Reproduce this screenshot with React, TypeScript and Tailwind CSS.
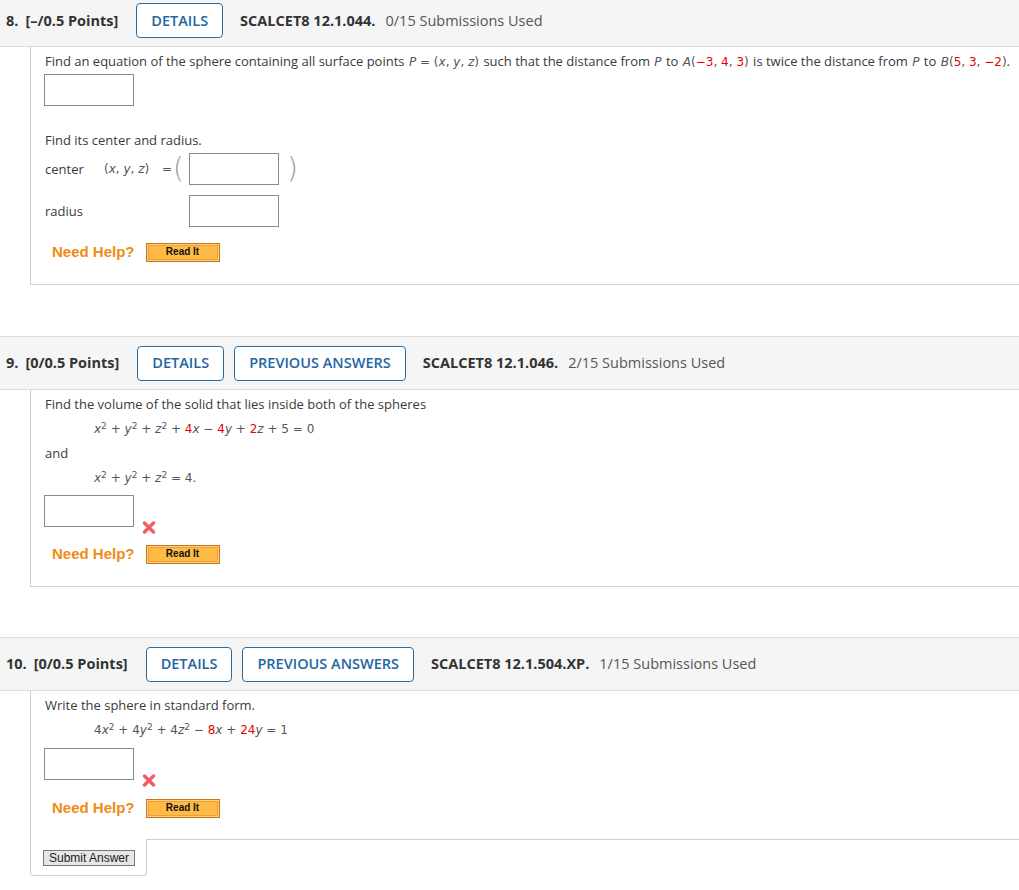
import type { ReactNode } from 'react'

const body = "font-['Open_Sans',sans-serif] text-[13px] leading-[18px] text-[#3a3a3a]"
const math = "font-['DejaVu_Sans',sans-serif] text-[12px] leading-[18px] text-[#555]"

const V = ({ children }: { children: ReactNode }) => <i className="italic">{children}</i>
const R = ({ children }: { children: ReactNode }) => <span className="text-[#e80000]">{children}</span>
const Sq = () => <sup className="text-[9px]">2</sup>

const WrongIcon = () => (
  <svg width={14} height={13} viewBox="0 0 14 13" className="ml-[8px] mt-[26px] shrink-0">
    <path d="M2.5 2l9 9M11.5 2l-9 9" stroke="#f25c66" strokeWidth="3.4" strokeLinecap="round" />
  </svg>
)

function AnswerBox() {
  return <input readOnly className="-ml-px h-[32px] w-[90px] border border-[#8a8a8a] bg-white outline-none" />
}

function NeedHelp() {
  return (
    <div className="ml-[7px] flex h-[18px] items-center">
      <span className="font-['Liberation_Sans',sans-serif] text-[15px] font-bold text-[#ef8b14]">Need Help?</span>
      <button className="ml-[11px] flex h-[19px] w-[74px] items-center justify-center border border-[#c8741c] bg-[#ffbb45] shadow-[inset_0_0_0_1px_#ffd07a,inset_0_0_0_2px_#eaa03c] font-['Liberation_Sans',sans-serif] text-[10px] font-bold text-[#111]">
        Read It
      </button>
    </div>
  )
}

function Header({
  num,
  points,
  code,
  subs,
  prev,
  first,
}: {
  num: string
  points: string
  code: string
  subs: string
  prev?: boolean
  first?: boolean
}) {
  const btn =
    "flex h-[35px] items-center rounded-[4px] border border-[#2c6b9e] bg-white px-[14px] text-[14.5px] font-semibold text-[#1f66a3]"
  return (
    <div
      className={`${
        first ? 'h-[47px] border-b pt-[3px]' : 'flex h-[54px] items-center border-y'
      } border-[#dcdcdc] bg-[#f5f5f5] pl-[6px] font-['Open_Sans',sans-serif] text-[14.5px]`}
    >
      <div className="flex h-[35px] items-center">
        <span className="font-bold text-[#333]">{num}</span>
        <span className="ml-[7px] font-bold text-[#333]">[{points} Points]</span>
        <button className={`${btn} ml-[18px]`}>DETAILS</button>
        {prev && <button className={`${btn} ml-[10px]`}>PREVIOUS ANSWERS</button>}
        <span className="ml-[17px] font-bold text-[#333]">{code}</span>
        <span className="ml-[10px] text-[#555]">{subs}</span>
      </div>
    </div>
  )
}

export default function App() {
  return (
    <div className="min-h-[890px] w-[1019px] bg-white">
      {/* Question 8 */}
      <Header first num="8." points="–/0.5" code="SCALCET8 12.1.044." subs="0/15 Submissions Used" />
      <div className={`ml-[30px] flex flex-col border-b border-l border-[#cfcfcf] pb-[23px] pl-[14px] pt-[5px] ${body}`}>
        <p>
          Find an equation of the sphere containing all surface points{' '}
          <span className={`${math} mx-px`}>
            <V>P</V> = (<V>x</V>, <V>y</V>, <V>z</V>)
          </span>{' '}
          such that the distance from <span className={`${math} mx-px`}><V>P</V></span> to{' '}
          <span className={`${math} mx-px`}>
            <V>A</V>(<R>−3</R>, <R>4</R>, <R>3</R>)
          </span>{' '}
          is twice the distance from <span className={`${math} mx-px`}><V>P</V></span> to{' '}
          <span className={`${math} ml-px`}>
            <V>B</V>(<R>5</R>, <R>3</R>, <R>−2</R>)
          </span>
          .
        </p>
        <div className="mt-[3px]">
          <AnswerBox />
        </div>
        <p className="mt-[25px]">Find its center and radius.</p>
        <div className="mt-[4px] flex h-[32px] items-center">
          <span className="w-[59px]">center</span>
          <span className={`${math} w-[58px] text-[12.5px]`}>
            (<V>x</V>, <V>y</V>, <V>z</V>)
          </span>
          <span className={`${math} w-[11px]`}>=</span>
          <span className="w-[17px] font-['DejaVu_Sans',sans-serif] text-[28px] font-extralight leading-none text-[#9a9a9a]">(</span>
          <AnswerBox />
          <span className="ml-[8px] font-['DejaVu_Sans',sans-serif] text-[28px] font-extralight leading-none text-[#9a9a9a]">)</span>
        </div>
        <div className="mt-[10px] flex h-[32px] items-center">
          <span className="w-[145px]">radius</span>
          <AnswerBox />
        </div>
        <div className="mt-[16px]">
          <NeedHelp />
        </div>
      </div>

      {/* Question 9 */}
      <div className="mt-[51px]">
        <Header prev num="9." points="0/0.5" code="SCALCET8 12.1.046." subs="2/15 Submissions Used" />
      </div>
      <div className={`ml-[30px] flex flex-col border-b border-l border-[#cfcfcf] pb-[23px] pl-[14px] pt-[5px] ${body}`}>
        <p>Find the volume of the solid that lies inside both of the spheres</p>
        <p className={`${math} ml-[49px] mt-[7px]`}>
          <V>x</V>
          <Sq /> + <V>y</V>
          <Sq /> + <V>z</V>
          <Sq /> + <R>4</R>
          <V>x</V> − <R>4</R>
          <V>y</V> + <R>2</R>
          <V>z</V> + 5 = 0
        </p>
        <p className="mt-[6px]">and</p>
        <p className={`${math} ml-[49px] mt-[7px]`}>
          <V>x</V>
          <Sq /> + <V>y</V>
          <Sq /> + <V>z</V>
          <Sq /> = 4.
        </p>
        <div className="mt-[8px] flex items-start">
          <AnswerBox />
          <WrongIcon />
        </div>
        <div className="mt-[11px]">
          <NeedHelp />
        </div>
      </div>

      {/* Question 10 */}
      <div className="mt-[50px]">
        <Header prev num="10." points="0/0.5" code="SCALCET8 12.1.504.XP." subs="1/15 Submissions Used" />
      </div>
      <div className={`ml-[30px] flex flex-col border-l border-[#cfcfcf] pb-[22px] pl-[14px] pt-[5px] ${body}`}>
        <p>Write the sphere in standard form.</p>
        <p className={`${math} ml-[49px] mt-[7px]`}>
          4<V>x</V>
          <Sq /> + 4<V>y</V>
          <Sq /> + 4<V>z</V>
          <Sq /> − <R>8</R>
          <V>x</V> + <R>24</R>
          <V>y</V> = 1
        </p>
        <div className="mt-[9px] flex items-start">
          <AnswerBox />
          <WrongIcon />
        </div>
        <div className="mt-[12px]">
          <NeedHelp />
        </div>
      </div>
      <div className="flex">
        <div className="ml-[30px] w-[117px] rounded-b-[4px] border-x border-b border-[#cfcfcf] pb-[9px] pl-[12px] pt-[11px]">
          <button className="flex h-[16px] items-center border border-[#777] bg-[#e6e6e6] px-[5px] font-['Liberation_Sans',sans-serif] text-[12px] text-[#222]">
            Submit Answer
          </button>
        </div>
        <div className="flex-1 border-t border-[#cfcfcf]" />
      </div>
    </div>
  )
}
